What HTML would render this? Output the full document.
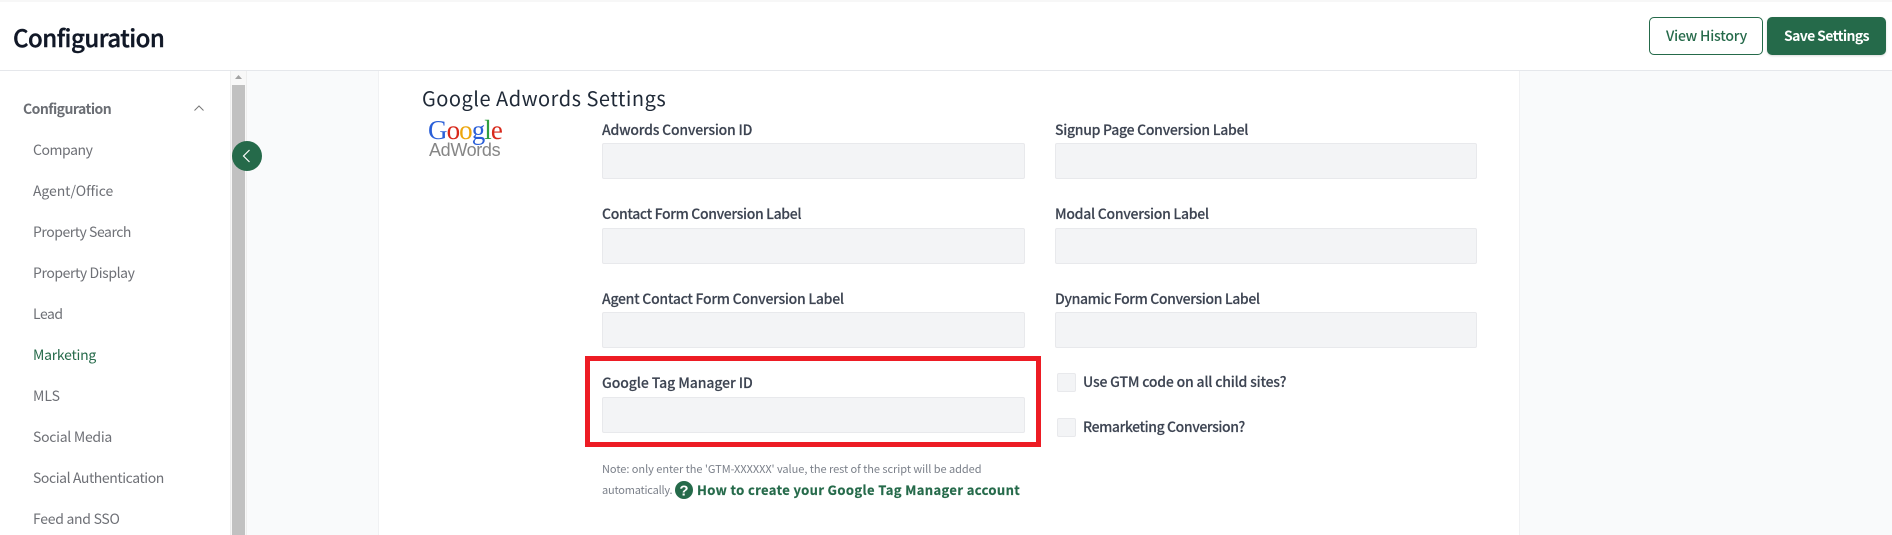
<!DOCTYPE html>
<html><head><meta charset="utf-8"><style>
html,body{margin:0;padding:0;width:1892px;height:535px;overflow:hidden;background:#fff}
body{position:relative;font-family:"Noto Sans CJK JP","Liberation Sans",sans-serif}
.a{position:absolute;box-sizing:border-box}
.t{position:absolute;white-space:nowrap;line-height:20px;height:20px}
.l{font-size:14px;font-weight:500;color:#3d4452;-webkit-text-stroke:.15px #3d4452}
.i{position:absolute;box-sizing:border-box;background:#f3f4f6;border:1px solid #e8e9ec;border-radius:2px;height:36px}
.n{font-size:14px;color:#6e7076;left:33px}
.c{position:absolute;box-sizing:border-box;width:19px;height:19px;left:1057px;background:#f3f4f6;border:1px solid #e8e9ec;border-radius:2px}
</style></head><body>
<div class="a" style="left:0;top:0;width:1892px;height:2px;background:#f7f7f7"></div>
<div class="a" style="left:247px;top:71px;width:132px;height:464px;background:#f9fafb;border-right:1px solid #f0f1f3"></div>
<div class="a" style="left:1519px;top:71px;width:373px;height:464px;background:#f9fafb;border-left:1px solid #f0f1f3"></div>
<div class="a" style="left:0;top:70px;width:1892px;height:1px;background:#e5e7eb"></div>
<div class="t" style="left:13px;top:22px;height:30px;line-height:30px;font-size:24px;font-weight:500;color:#111827;letter-spacing:-.5px;-webkit-text-stroke:.4px #111827">Configuration</div>
<div class="a" style="left:1649px;top:17px;width:114px;height:38px;border:1px solid #256a4a;border-radius:5px;background:#fff"></div>
<div class="t" style="left:1666px;top:26px;font-size:14px;font-weight:500;color:#256a4a;letter-spacing:-.2px">View History</div>
<div class="a" style="left:1767px;top:17px;width:119px;height:38px;border-radius:5px;background:#256a4a;box-shadow:0 1px 2px rgba(0,0,0,.15)"></div>
<div class="t" style="left:1784px;top:26px;font-size:14px;font-weight:700;color:#fff;letter-spacing:-.62px">Save Settings</div>

<div class="a" style="left:230px;top:71px;width:17px;height:464px;background:#f8f8f8;border-left:1px solid #eee;border-right:1px solid #eee"></div>
<div class="a" style="left:232px;top:85px;width:13px;height:450px;background:#c1c1c1"></div>
<svg class="a" style="left:234px;top:74px" width="9" height="6"><path d="M1 5L4.500 1L8 5Z" fill="#a3a3a3"/></svg>

<div class="t" style="left:23px;top:99px;font-size:14px;font-weight:700;color:#6b6e74;letter-spacing:-.54px">Configuration</div>
<svg class="a" style="left:193px;top:104px" width="12" height="8"><path d="M1.500 6.500L6 2L10.500 6.500" fill="none" stroke="#777" stroke-width="1"/></svg>
<div class="t n" style="top:140px;letter-spacing:-.44px">Company</div>
<div class="t n" style="top:181px;letter-spacing:-.08px">Agent/Office</div>
<div class="t n" style="top:222px;letter-spacing:-.46px">Property Search</div>
<div class="t n" style="top:263px;letter-spacing:-.41px">Property Display</div>
<div class="t n" style="top:304px;letter-spacing:-.48px">Lead</div>
<div class="t n" style="top:345px;color:#256a4a;letter-spacing:-.25px">Marketing</div>
<div class="t n" style="top:386px;letter-spacing:0">MLS</div>
<div class="t n" style="top:427px;letter-spacing:-.28px">Social Media</div>
<div class="t n" style="top:468px;letter-spacing:-.42px">Social Authentication</div>
<div class="t n" style="top:509px;letter-spacing:-.28px">Feed and SSO</div>

<div class="a" style="left:232px;top:141px;width:30px;height:30px;border-radius:50%;background:#256a4a"></div>
<svg class="a" style="left:241px;top:148px" width="12" height="16"><path d="M8.500 2L2.500 8L8.500 14" fill="none" stroke="#fff" stroke-width="1.200"/></svg>

<div class="t" style="left:422px;top:84px;height:28px;line-height:28px;font-size:20px;color:#1f2937;letter-spacing:.5px">Google Adwords Settings</div>
<div class="t" style="left:428px;top:114px;height:32px;line-height:32px;font-family:'Liberation Serif',serif;font-size:27px;letter-spacing:-.95px"><span style="color:#2a5fd8">G</span><span style="color:#d8291c">o</span><span style="color:#eda60c">o</span><span style="color:#2a5fd8">g</span><span style="color:#2f9e3f">l</span><span style="color:#d8291c">e</span></div>
<div class="t" style="left:429px;top:140px;height:20px;line-height:20px;font-family:'Liberation Sans',sans-serif;font-size:18px;color:#868686;letter-spacing:-.35px">AdWords</div>

<div class="t l" style="left:602px;top:120px;letter-spacing:-.22px">Adwords Conversion ID</div>
<div class="i" style="left:602px;top:143px;width:423px"></div>
<div class="t l" style="left:1055px;top:120px;letter-spacing:-.28px">Signup Page Conversion Label</div>
<div class="i" style="left:1055px;top:143px;width:422px"></div>
<div class="t l" style="left:602px;top:204px;letter-spacing:-.35px">Contact Form Conversion Label</div>
<div class="i" style="left:602px;top:228px;width:423px"></div>
<div class="t l" style="left:1055px;top:204px;letter-spacing:-.28px">Modal Conversion Label</div>
<div class="i" style="left:1055px;top:228px;width:422px"></div>
<div class="t l" style="left:602px;top:289px;letter-spacing:-.27px">Agent Contact Form Conversion Label</div>
<div class="i" style="left:602px;top:312px;width:423px"></div>
<div class="t l" style="left:1055px;top:289px;letter-spacing:-.38px">Dynamic Form Conversion Label</div>
<div class="i" style="left:1055px;top:312px;width:422px"></div>

<div class="a" style="left:585px;top:356px;width:456px;height:91px;border:5px solid #ed1c24"></div>
<div class="t l" style="left:602px;top:373px;letter-spacing:-.08px">Google Tag Manager ID</div>
<div class="i" style="left:602px;top:397px;width:423px"></div>

<div class="c" style="top:373px"></div>
<div class="t l" style="left:1083px;top:372px;letter-spacing:-.2px">Use GTM code on all child sites?</div>
<div class="c" style="top:418px"></div>
<div class="t l" style="left:1083px;top:417px;letter-spacing:-.41px">Remarketing Conversion?</div>

<div class="t" style="left:602px;top:459px;font-size:11px;color:#7b808a;letter-spacing:-.04px">Note: only enter the 'GTM-XXXXXX' value, the rest of the script will be added</div>
<div class="t" style="left:602px;top:480px;font-size:11px;color:#7b808a;letter-spacing:-.2px">automatically.</div>
<svg class="a" style="left:675px;top:481px" width="18" height="18"><circle cx="9" cy="9" r="9" fill="#256a4a"/><text x="9" y="14.500" text-anchor="middle" font-family="Liberation Sans" font-weight="700" font-size="15" fill="#fff">?</text></svg>
<div class="t" style="left:697px;top:480px;font-size:13px;font-weight:700;color:#256a4a;letter-spacing:.37px;-webkit-text-stroke:.2px #256a4a">How to create your Google Tag Manager account</div>
</body></html>
